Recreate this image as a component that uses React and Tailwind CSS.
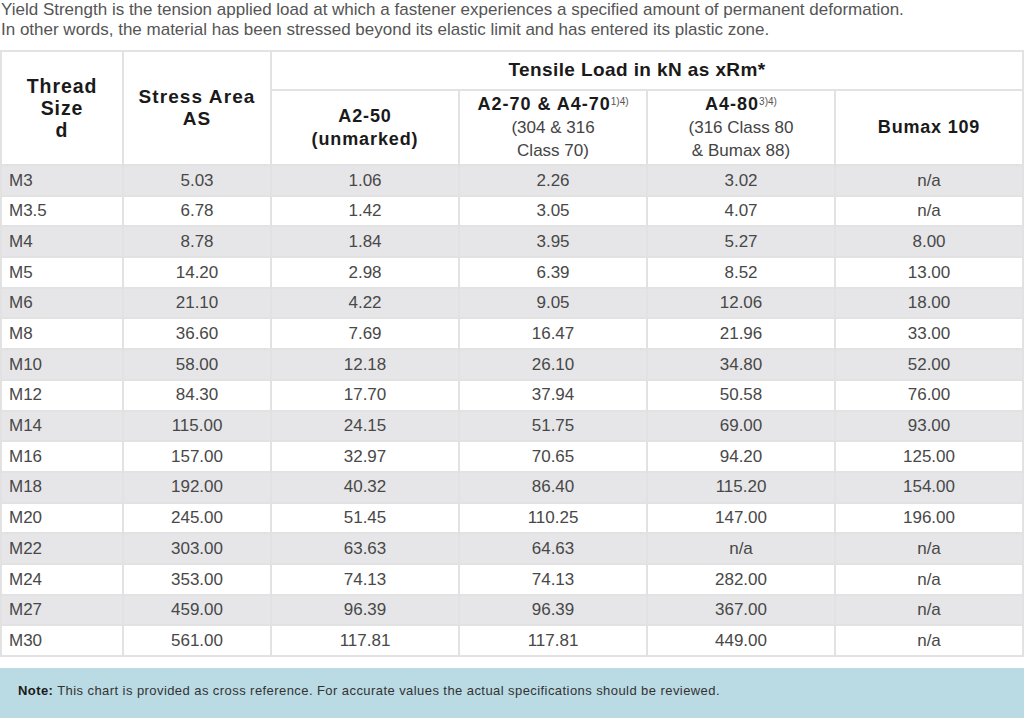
const rows = [
  ["M3", "5.03", "1.06", "2.26", "3.02", "n/a"],
  ["M3.5", "6.78", "1.42", "3.05", "4.07", "n/a"],
  ["M4", "8.78", "1.84", "3.95", "5.27", "8.00"],
  ["M5", "14.20", "2.98", "6.39", "8.52", "13.00"],
  ["M6", "21.10", "4.22", "9.05", "12.06", "18.00"],
  ["M8", "36.60", "7.69", "16.47", "21.96", "33.00"],
  ["M10", "58.00", "12.18", "26.10", "34.80", "52.00"],
  ["M12", "84.30", "17.70", "37.94", "50.58", "76.00"],
  ["M14", "115.00", "24.15", "51.75", "69.00", "93.00"],
  ["M16", "157.00", "32.97", "70.65", "94.20", "125.00"],
  ["M18", "192.00", "40.32", "86.40", "115.20", "154.00"],
  ["M20", "245.00", "51.45", "110.25", "147.00", "196.00"],
  ["M22", "303.00", "63.63", "64.63", "n/a", "n/a"],
  ["M24", "353.00", "74.13", "74.13", "282.00", "n/a"],
  ["M27", "459.00", "96.39", "96.39", "367.00", "n/a"],
  ["M30", "561.00", "117.81", "117.81", "449.00", "n/a"],
];

const cell = "border-2 border-[#e2e2e2]";

export default function App() {
  return (
    <div className="w-[1024px] h-[718px] overflow-hidden bg-white font-['Liberation_Sans',Arial,sans-serif]">
      <p className="text-[17px] leading-[20px] text-[#555] pl-[1px]">
        Yield Strength is the tension applied load at which a fastener experiences a specified amount of permanent deformation.
        <br />
        In other words, the material has been stressed beyond its elastic limit and has entered its plastic zone.
      </p>

      <table className="mt-[10px] w-[1022px] border-collapse table-fixed text-[#1a1a1a]">
        <colgroup>
          <col className="w-[122px]" />
          <col className="w-[148px]" />
          <col className="w-[188px]" />
          <col className="w-[188px]" />
          <col className="w-[188px]" />
          <col className="w-[188px]" />
        </colgroup>
        <thead>
          <tr className="h-[39px]">
            <th rowSpan={2} className={`${cell} text-[19.5px] leading-[22px] font-bold tracking-[0.9px]`}>
              Thread
              <br />
              Size
              <br />d
            </th>
            <th rowSpan={2} className={`${cell} text-[19px] leading-[22px] font-bold tracking-[1.1px]`}>
              Stress Area
              <br />
              AS
            </th>
            <th colSpan={4} className={`${cell} text-[19px] font-bold tracking-[0.4px] pr-[20px]`}>
              Tensile Load in kN as xRm*
            </th>
          </tr>
          <tr className="h-[75px]">
            <th className={`${cell} text-[18px] leading-[23px] font-bold tracking-[0.9px]`}>
              A2-50
              <br />
              (unmarked)
            </th>
            <th className={`${cell} text-[18px] leading-[23px]`}>
              <span className="font-bold tracking-[1px]">
                A2-70 &amp; A4-70<sup className="text-[10px] font-normal text-[#555] tracking-normal">1)4)</sup>
              </span>
              <br />
              <span className="font-normal text-[#444] text-[17px]">
                (304 &amp; 316
                <br />
                Class 70)
              </span>
            </th>
            <th className={`${cell} text-[18px] leading-[23px]`}>
              <span className="font-bold tracking-[1px]">
                A4-80<sup className="text-[10px] font-normal text-[#555] tracking-normal">3)4)</sup>
              </span>
              <br />
              <span className="font-normal text-[#444] text-[17px]">
                (316 Class 80
                <br />
                &amp; Bumax 88)
              </span>
            </th>
            <th className={`${cell} text-[18px] font-bold tracking-[0.8px]`}>Bumax 109</th>
          </tr>
        </thead>
        <tbody className="text-[17px] text-[#484848]">
          {rows.map((r, i) => (
            <tr key={r[0]} className={`h-[30.7px] ${i % 2 === 0 ? "bg-[#e6e6e8]" : "bg-white"}`}>
              {r.map((v, j) => (
                <td key={j} className={`${cell} ${j === 0 ? "text-left pl-[7px]" : "text-center"} py-0`}>
                  {v}
                </td>
              ))}
            </tr>
          ))}
        </tbody>
      </table>

      <div className="mt-[11px] h-[60px] bg-[#badae4] pl-[18px] pt-[13px] text-[13px] tracking-[0.43px] text-[#333]">
        <span className="font-bold text-[#1a1a1a]">Note:</span> This chart is provided as cross reference. For accurate values the actual specifications should be reviewed.
      </div>
    </div>
  );
}
